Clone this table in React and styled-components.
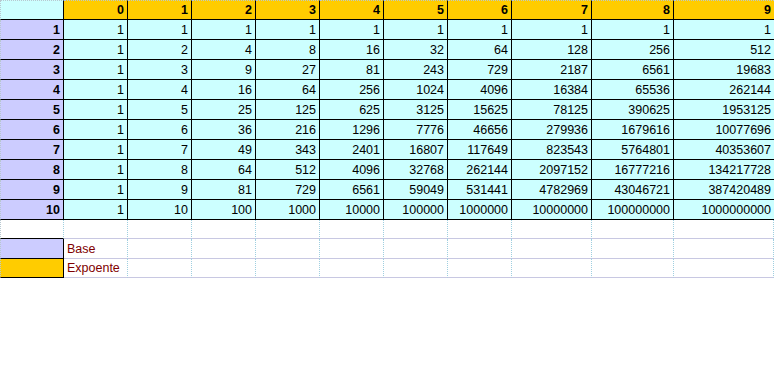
import { styled, createGlobalStyle } from "styled-components";

const GlobalStyle = createGlobalStyle`
  body {
    margin: 0;
    background: #ffffff;
    font-family: "Liberation Sans", Arial, sans-serif;
  }
`;

const Sheet = styled.div`
  width: 774px;
  overflow: hidden;
`;

const Table = styled.table`
  width: 774px;
  table-layout: fixed;
  border-collapse: separate;
  border-spacing: 0;
  font-size: 12.5px;
  color: #000000;
`;

const Col = styled.col`
  width: ${(p) => p.$w}px;
`;

const Cell = styled.td`
  box-sizing: border-box;
  height: 20px;
  padding: 0 3px 1px 2px;
  line-height: 15px;
  vertical-align: bottom;
  text-align: right;
  white-space: nowrap;
  overflow: hidden;
  border-right: 1px solid #000000;
  border-bottom: 1px solid #000000;
`;

const Corner = styled(Cell)`
  background: #ccffff;
  border-top: 1px dotted #b8c8d0;
  border-left: 1px dotted #b8c8d0;
`;

const ColHead = styled(Cell)`
  background: #ffcc00;
  font-weight: bold;
  border-top: 1px dotted #b8c8d0;
  ${(p) => p.$last && "border-right: 0;"}
`;

const RowHead = styled(Cell)`
  background: #ccccff;
  font-weight: bold;
  border-left: 1px dotted #b8c8d0;
`;

const Value = styled(Cell)`
  background: #ccffff;
  ${(p) => p.$last && "border-right: 0;"}
`;

const Blank = styled(Cell)`
  height: ${(p) => p.$h || 20}px;
  border-right: 1px dotted #9fcfe0;
  border-bottom: 1px solid #c8c8e2;
  border-left: ${(p) => (p.$first ? "1px dotted #b8c8d0" : "0")};
  ${(p) => p.$edge && "border-bottom-color: #000000;"}
`;

const Swatch = styled(Cell)`
  height: ${(p) => p.$h || 20}px;
  background: ${(p) => p.$color};
  border-left: 1px dotted #b8c8d0;
`;

const Label = styled(Blank)`
  text-align: left;
  padding-left: 3px;
  color: #800000;
  overflow: visible;
`;

const widths = [64, 64, 64, 64, 64, 64, 64, 64, 80, 82, 100];
const exps = [0, 1, 2, 3, 4, 5, 6, 7, 8, 9];
const bases = [1, 2, 3, 4, 5, 6, 7, 8, 9, 10];

const legend = [
  { name: "Base", color: "#ccccff", h: 20 },
  { name: "Expoente", color: "#ffcc00", h: 19 },
];

const App = () => {
  return (
    <Sheet>
      <GlobalStyle />
      <Table>
        <colgroup>
          {widths.map((w, i) => (
            <Col key={i} $w={w} />
          ))}
        </colgroup>
        <tbody>
          <tr>
            <Corner />
            {exps.map((e) => (
              <ColHead key={e} $last={e === 9}>{e}</ColHead>
            ))}
          </tr>
          {bases.map((b) => (
            <tr key={b}>
              <RowHead>{b}</RowHead>
              {exps.map((e) => (
                <Value key={e} $last={e === 9}>{Math.pow(b, e)}</Value>
              ))}
            </tr>
          ))}
          <tr>
            {widths.map((w, i) => (
              <Blank key={i} $h={19} $first={i === 0} $edge={i === 0} />
            ))}
          </tr>
          {legend.map((item) => (
            <tr key={item.name}>
              <Swatch $color={item.color} $h={item.h} />
              <Label $h={item.h}>{item.name}</Label>
              {widths.slice(2).map((w, i) => (
                <Blank key={i} $h={item.h} />
              ))}
            </tr>
          ))}
        </tbody>
      </Table>
    </Sheet>
  );
};

export default App;
